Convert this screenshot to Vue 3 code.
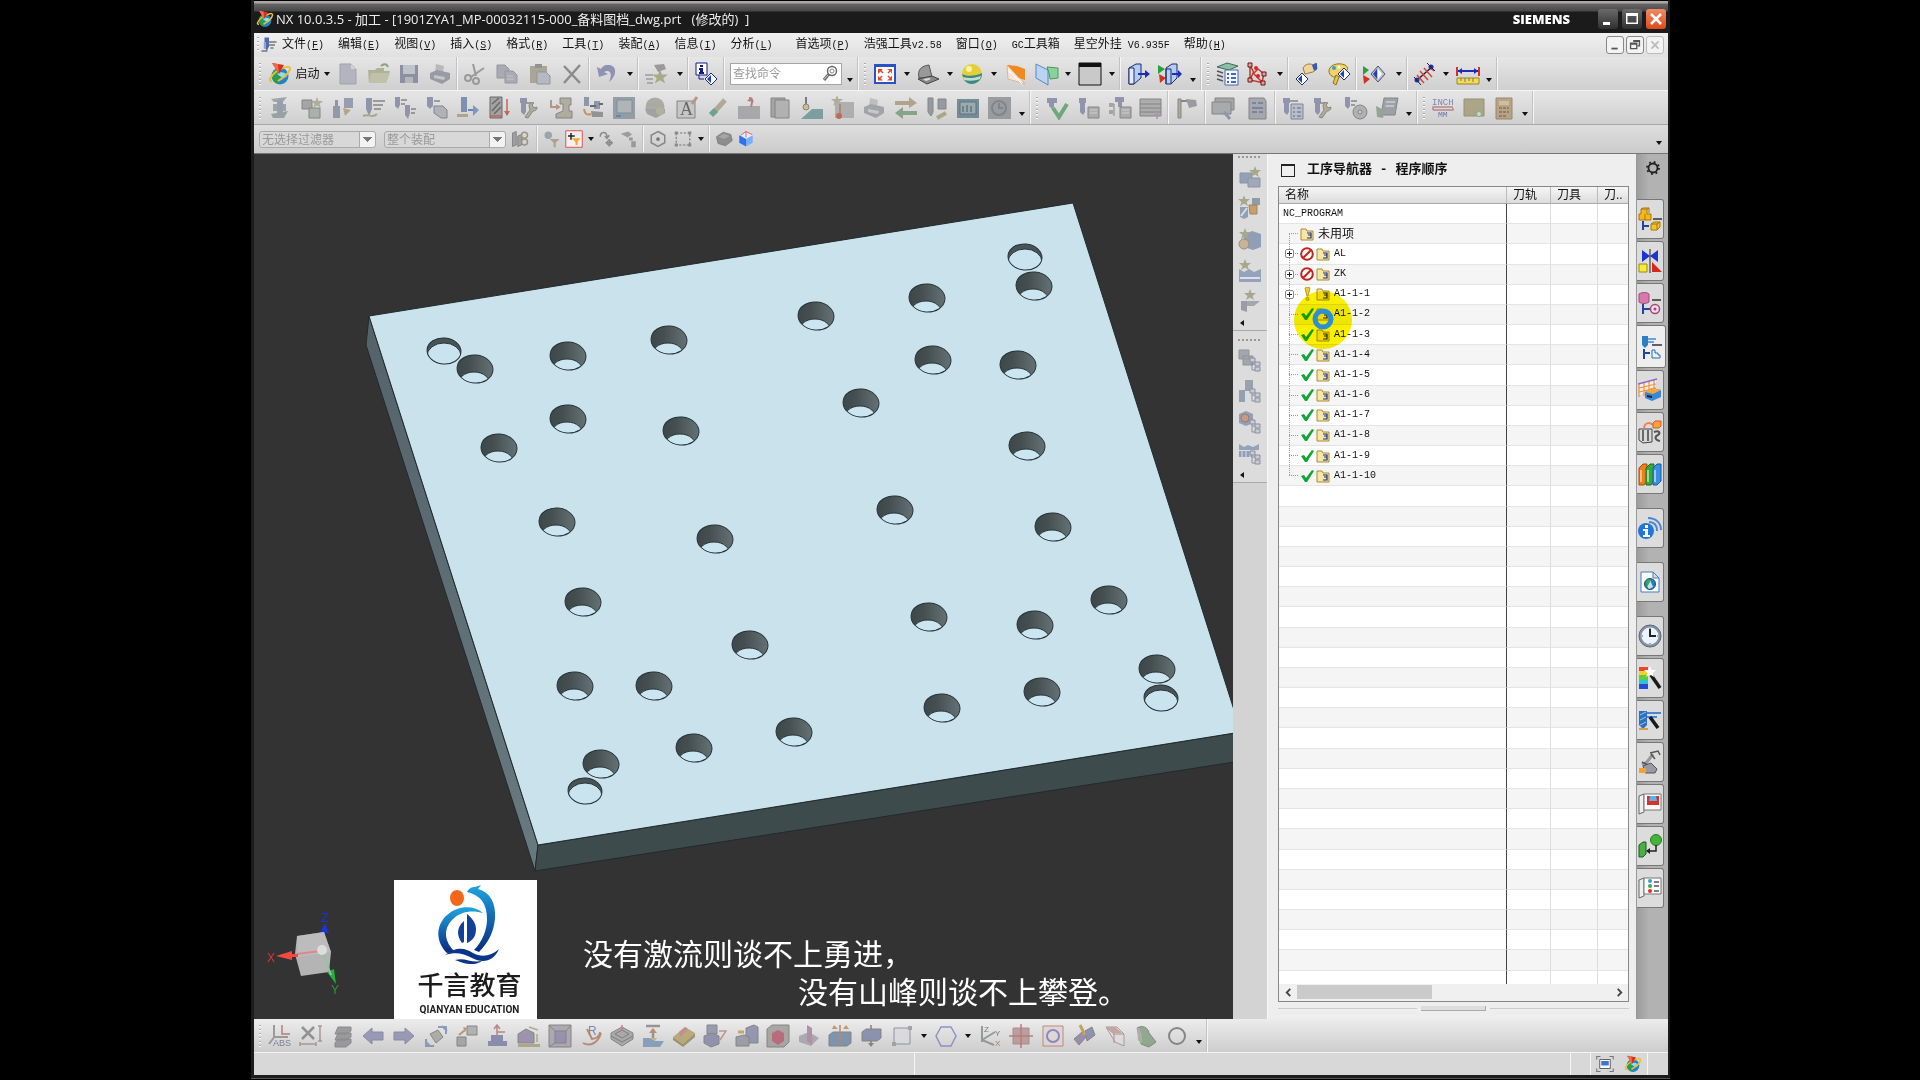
<template>
  <div class="desktop">
    <div class="window">
      <header class="titlebar">
        <svg class="ico18" viewBox="0 0 24 24" v-html="icons.nx"></svg>
        <h1>NX 10.0.3.5 - 加工 - [1901ZYA1_MP-00032115-000_备料图档_dwg.prt &nbsp;&nbsp;(修改的)&nbsp; ]</h1>
        <span class="brand">SIEMENS</span>
        <div class="winbtns">
          <button aria-label="最小化"><svg viewBox="0 0 20 20"><path d="M5 13h7v3H5z" fill="#fff" /></svg></button>
          <button aria-label="最大化"><svg viewBox="0 0 20 20"><path d="M4 4h12v11H4z M5.500 7v6.500h9V7z" fill="#fff" fill-rule="evenodd" /></svg></button>
          <button class="close" aria-label="关闭"><svg viewBox="0 0 20 20"><path d="M5 5l10 10M15 5L5 15" stroke="#fff" stroke-width="2.500" /></svg></button>
        </div>
      </header>

      <nav class="menubar">
        <i class="grip"></i>
        <svg class="ico18" viewBox="0 0 24 24" v-html="icons.millMenu"></svg>
        <button v-for="m in menus" :key="m.text" :class="{ spaced: m.spaced }">
          <span v-for="r in runs(m.text)" :key="r" :class="{ latin: isLatin(r) }">{{ r }}</span>
          <span v-if="m.key" class="latin">(<u>{{ m.key }}</u>)</span>
        </button>
        <div class="mdi">
          <button aria-label="最小化窗口"><svg viewBox="0 0 18 18"><path d="M5 12h7v2H5z" fill="#555" /></svg></button>
          <button aria-label="还原窗口"><svg viewBox="0 0 18 18"><path d="M7 4h7v6h-2M4 7h7v6H4zM4 8h7M7 5h7" fill="none" stroke="#555" stroke-width="1.500" /></svg></button>
          <button class="off" aria-label="关闭窗口" disabled><svg viewBox="0 0 18 18"><path d="M5 5l8 8M13 5l-8 8" stroke="#bbb" stroke-width="2" /></svg></button>
        </div>
      </nav>

      <div class="toolrow">
        <div v-for="(g, gi) in row1" :key="gi" class="group" :style="{ width: g.w + 'px' }">
          <i v-if="g.grip" class="grip"></i>
          <template v-for="(t, ti) in g.items" :key="ti">
            <i v-if="t === 'v'" class="caret"></i>
            <i v-else-if="t === 'o'" class="caret low"></i>
            <button v-else-if="t === 'start'" class="start">
              <svg class="ico24" viewBox="0 0 24 24" v-html="icons.nx"></svg>启动<i class="caret"></i>
            </button>
            <label v-else-if="t === 'search'" class="search">
              <input type="text" placeholder="查找命令" aria-label="查找命令" />
              <svg viewBox="0 0 18 18"><circle cx="11" cy="6" r="4.500" fill="#fff" stroke="#666" stroke-width="1.500" /><circle cx="11" cy="6" r="2" fill="none" stroke="#888" /><path d="M7.500 9.500L3 15" stroke="#666" stroke-width="3" /><path d="M7 10l-4 4.500" stroke="#ddd" /></svg>
            </label>
            <button v-else class="tool" :aria-label="t"><svg class="ico24" viewBox="0 0 24 24" v-html="icons[t]"></svg></button>
          </template>
        </div>
      </div>

      <div class="toolrow">
        <div v-for="(g, gi) in row2" :key="gi" class="group" :style="{ width: g.w + 'px' }">
          <i v-if="g.grip" class="grip"></i>
          <template v-for="(t, ti) in g.items" :key="ti">
            <i v-if="t === 'o'" class="caret low"></i>
            <button v-else class="tool dim" :aria-label="t"><svg class="ico24" viewBox="0 0 24 24" v-html="icons[t]"></svg></button>
          </template>
        </div>
      </div>

      <div class="filterrow">
        <select aria-label="选择过滤器" disabled><option>无选择过滤器</option></select>
        <select aria-label="选择范围" disabled><option>整个装配</option></select>
        <div v-for="(g, gi) in row3" :key="gi" class="group small" :style="{ width: g.w + 'px' }">
          <template v-for="(t, ti) in g.items" :key="ti">
            <i v-if="t === 'v'" class="caret"></i>
            <button v-else class="tool" :aria-label="t"><svg class="ico18" viewBox="0 0 24 24" v-html="icons[t]"></svg></button>
          </template>
        </div>
        <i class="caret last"></i>
      </div>

      <main class="work">
        <section class="viewport">
          <svg class="scene" viewBox="254 154 979 865" preserveAspectRatio="xMinYMin slice">
            <defs>
              <linearGradient id="bore" x1="0" x2="1"><stop offset="0" stop-color="#3d4749" /><stop offset=".35" stop-color="#454f50" /><stop offset="1" stop-color="#667376" /></linearGradient>
              <linearGradient id="left" x1="0" y1="0" x2="0" y2="1"><stop offset="0" stop-color="#54626a" /><stop offset="1" stop-color="#687a80" /></linearGradient>
              <clipPath id="rim"><ellipse rx="18" ry="14" transform="rotate(5)" /></clipPath>
              <clipPath id="rim2"><ellipse rx="17" ry="13" transform="rotate(5)" /></clipPath>
            </defs>
            <path d="M369 316L366 345 535 871 538 845z" fill="url(#left)" stroke="#222a2c" />
            <path d="M538 845L535 871 1241 761 1241 732z" fill="#3e4b4d" stroke="#222a2c" />
            <path d="M369 316L1073 203 1241 732 538 845z" fill="#c9e2eb" stroke="#1f2a2e" />
            <g v-for="h in holes" :key="h.join()" :transform="`translate(${h[0]} ${h[1]})`">
              <g clip-path="url(#rim)">
                <ellipse rx="19" ry="15" fill="url(#bore)" />
                <ellipse cx="-1" cy="17" rx="17" ry="14" fill="#cbe6f0" stroke="#2b3538" />
              </g>
              <ellipse rx="18" ry="14" fill="none" stroke="#27343a" transform="rotate(5)" />
            </g>
            <g v-for="h in shallow" :key="h.join()" :transform="`translate(${h[0]} ${h[1]})`">
              <g clip-path="url(#rim2)">
                <ellipse rx="18" ry="14" fill="#485357" />
                <ellipse cy="5" rx="17" ry="13" fill="#c9e4ee" stroke="#2b3538" />
              </g>
              <ellipse rx="17" ry="13" fill="none" stroke="#27343a" transform="rotate(5)" />
            </g>
            <!-- view triad -->
            <g class="triad">
              <path d="M320 933l5-10 4 10z" fill="#1b34d6" />
              <path d="M297 936l27-4 7 20-2 20-28 4-6-22z" fill="#b4b4b4" />
              <path d="M297 936l27-4 7 20-33 5z" fill="#c2c2c2" opacity=".6" />
              <path d="M297 954l24-3" stroke="#d88" stroke-width="2" />
              <path d="M276 956l16-5v3h6v3h-6v3z" fill="#f04a42" />
              <path d="M327 972l7-3 2 15z" fill="#25b03c" />
              <path d="M323 953l8 22" stroke="#8fc79a" stroke-width="2" />
              <circle cx="322" cy="950" r="5" fill="#ddd" />
              <text x="267" y="962" fill="#d8382f">X</text>
              <text x="321" y="922" fill="#1b34d6">Z</text>
              <text x="331" y="994" fill="#259a35">Y</text>
            </g>
          </svg>
          <figure class="logo">
            <svg viewBox="0 0 143 84">
              <defs>
                <linearGradient id="q" x1="0" y1="0" x2="0" y2="1"><stop offset="0" stop-color="#1fa5e0" /><stop offset="1" stop-color="#0a2a80" /></linearGradient>
              </defs>
              <ellipse cx="63" cy="18" rx="7" ry="8" fill="#f4661c" />
              <path d="M73 12c2-4 5-5 8-5l6-2-3 4c12 3 18 14 17 29-1 14-7 25-16 34l-5-2c9-9 13-21 13-31 0-15-6-24-20-27z" fill="url(#q)" />
              <path d="M89 33C80 25 64 25 53 35c-12 11-11 27 0 38l8-1c-11-10-12-23-3-32 8-9 21-10 31-7z" fill="url(#q)" />
              <path d="M73 34c5 4 9 9 9 15 0 8-4 12-9 14z M70 41c-7 6-8 14-2 22l2-1z" fill="#123f9a" />
              <path d="M51 75c12-9 20-7 28-2 9 5 18 3 26-4-5 12-16 15-27 9-9-5-17-6-27-3z M61 80c10-3 15 3 27 1-9 6-19 2-27-1z" fill="#0c3488" />
            </svg>
            <figcaption>千言教育<small>QIANYAN EDUCATION</small></figcaption>
          </figure>
          <p class="caption first">没有激流则谈不上勇进，</p>
          <p class="caption second">没有山峰则谈不上攀登。</p>
        </section>

        <aside class="sidebar">
          <div v-for="(s, si) in side" :key="si" class="sideband">
            <i class="grip flat"></i>
            <button v-for="t in s" :key="t" class="tool" :aria-label="t"><svg class="ico24" viewBox="0 0 24 24" v-html="icons[t]"></svg></button>
            <i class="caret left"></i>
          </div>
        </aside>

        <section class="navigator">
          <h2><i class="pin"></i>工序导航器 - 程序顺序</h2>
          <div class="grid">
            <div class="tablewrap">
              <table>
                <colgroup><col class="c1" /><col class="c2" /><col class="c3" /><col class="c4" /></colgroup>
                <thead>
                  <tr><th>名称</th><th>刀轨</th><th>刀具</th><th>刀..</th></tr>
                </thead>
                <tbody>
                  <tr v-for="(n, i) in nodes" :key="n.name">
                    <td>
                      <div class="node">
                        <span v-if="i > 0" class="guide" :class="{ begin: i === 1, end: i === nodes.length - 1 }">
                          <button v-if="n.open" aria-label="展开"></button>
                        </span>
                        <svg v-if="n.state" class="state" viewBox="0 0 14 14" v-html="icons[n.state]"></svg>
                        <svg v-if="i > 0" class="state" viewBox="0 0 14 14" v-html="icons.folder"></svg>
                        <span class="name" :class="{ latin: isLatin(n.name) }">{{ n.name }}</span>
                      </div>
                    </td>
                    <td></td><td></td><td></td>
                  </tr>
                  <tr v-for="k in 24" :key="k"><td></td><td></td><td></td><td></td></tr>
                  <tr class="cut"><td></td><td></td><td></td><td></td></tr>
                </tbody>
              </table>
            </div>
            <div class="hscroll">
              <button aria-label="向左"><svg viewBox="0 0 10 10"><path d="M7 1L3 5l4 4" fill="none" stroke="#444" stroke-width="2" /></svg></button>
              <div class="track"><i></i></div>
              <button aria-label="向右"><svg viewBox="0 0 10 10"><path d="M3 1l4 4-4 4" fill="none" stroke="#444" stroke-width="2" /></svg></button>
            </div>
            <!-- click highlight with the busy ring -->
            <svg class="busy" viewBox="0 0 60 60">
              <circle cx="30" cy="30" r="29" fill="#f9f000" />
            </svg>
            <svg class="ring" viewBox="0 0 22 22">
              <circle cx="11" cy="11" r="8" fill="none" stroke="#2b8fd6" stroke-width="5" />
            </svg>
          </div>
          <div class="splitter"><i></i></div>
        </section>

        <nav class="tabs">
          <button class="gear" aria-label="设置"><svg class="ico18" viewBox="0 0 24 24" v-html="icons.gear"></svg></button>
          <div v-for="(g, gi) in tabs" :key="gi" class="tabgroup">
            <button v-for="t in g" :key="t" :class="{ active: t === 'opNav' }" :aria-label="t">
              <svg class="ico24" viewBox="0 0 24 24" v-html="icons[t]"></svg>
            </button>
          </div>
        </nav>
      </main>

      <div class="bottomrow">
        <div class="group" :style="{ width: '954px' }">
          <i class="grip"></i>
          <template v-for="(t, ti) in bottom" :key="ti">
            <i v-if="t === 'v'" class="caret"></i>
            <i v-else-if="t === 'o'" class="caret low"></i>
            <button v-else class="tool dim" :aria-label="t"><svg class="ico24" viewBox="0 0 24 24" v-html="icons[t]"></svg></button>
          </template>
        </div>
      </div>
      <footer class="status">
        <span class="cue"></span>
        <span class="msg"></span>
        <span class="slot"></span>
        <span class="tray">
          <svg class="ico18" viewBox="0 0 24 24" v-html="icons.fullscreen"></svg>
          <svg class="ico18" viewBox="0 0 24 24" v-html="icons.nx"></svg>
        </span>
        <span class="slot"></span>
      </footer>
    </div>
  </div>
</template>

<script setup>
const isLatin = (t) => /^[\x20-\x7e]+$/.test(t)
const runs = (t) => t.match(/[\x20-\x7e]+|[^\x20-\x7e]+/g)

const menus = [
  { text: '文件', key: 'F' },
  { text: '编辑', key: 'E' },
  { text: '视图', key: 'V' },
  { text: '插入', key: 'S' },
  { text: '格式', key: 'R' },
  { text: '工具', key: 'T' },
  { text: '装配', key: 'A' },
  { text: '信息', key: 'I' },
  { text: '分析', key: 'L' },
  { text: '首选项', key: 'P', spaced: true },
  { text: '浩强工具v2.58' },
  { text: '窗口', key: 'O' },
  { text: 'GC工具箱' },
  { text: '星空外挂 V6.935F' },
  { text: '帮助', key: 'H' }
]

// 'v' is a drop-down arrow, 'o' the overflow arrow at the end of a band
const row1 = [
  { w: 204, grip: true, items: ['start', 'newFile', 'open', 'save', 'print'] },
  { w: 132, items: ['cut', 'copy', 'paste', 'del'] },
  { w: 49, items: ['undo', 'v'] },
  { w: 50, items: ['star', 'v'] },
  { w: 36, items: ['cmdInfo'] },
  { w: 134, items: ['search', 'o'] },
  { w: 262, grip: true, items: ['fit', 'v', 'shade', 'v', 'ball', 'v', 'clipPlane', 'section', 'v', 'bgRect', 'v'] },
  { w: 81, items: ['door', 'door2', 'o'] },
  { w: 87, grip: true, items: ['layers', 'redNodes', 'v'] },
  { w: 68, items: ['handShow', 'palette'] },
  { w: 51, items: ['playShow', 'v'] },
  { w: 90, items: ['measure', 'v', 'ruler', 'o'] }
]

const row2 = [
  {
    w: 777, grip: true,
    items: ['insertMill', 'copyStar', 'tool', 'op', 'opTree', 'opCopy', 'mill2', 'hatch', 'millKey', 'flow', 'millFlow', 'frame', 'dome', 'letterA', 'pen',
      'boxUp', 'pages', 'slope', 'rectStar', 'print', 'swap', 'drills', 'panel', 'clock2', 'o']
  },
  { w: 138, grip: true, items: ['check', 'opSheet', 'opTreeSheet', 'sheet'] },
  { w: 37, items: ['arm'] },
  { w: 70, items: ['screens', 'doc'] },
  { w: 142, items: ['millList', 'millKey', 'millDisc', 'listCheck', 'o'] },
  { w: 116, grip: true, items: ['inch', 'board', 'calc', 'o'] }
]

const row3 = [
  { w: 32, items: ['asm'] },
  { w: 106, items: ['funnel', 'funnelRed', 'v', 'snap', 'snap2'] },
  { w: 66, items: ['hexDot', 'marquee', 'v'] },
  { w: 50, items: ['grayCube', 'blueCube'] }
]

const bottom = ['abs', 'dims', 'stack', 'arrowL', 'arrowR', 'rotate', 'moveBox', 'extrude', 'cubeDim', 'cubeBox', 'radius', 'net', 'lift', 'slab',
  'millBlock', 'blocks', 'redCube', 'plane', 'splitBox', 'boxDown', 'square', 'v', 'hexagon', 'v', 'axes', 'crossRect', 'circRect', 'tubes', 'chamfer', 'bell', 'circle', 'o']

const side = [
  ['sCopy', 'sTool', 'sBlock', 'sCastle', 'sOp'],
  ['tList', 'tTool', 'tBlock', 'tCastle']
]

const tabs = [
  ['asmNav', 'constraint', 'partNav', 'opNav', 'featNav', 'machine', 'books'],
  ['infoWave'],
  ['web'],
  ['clock', 'rainbow', 'wizard', 'robot', 'roleA', 'link', 'roleB']
]

const nodes = [
  { name: 'NC_PROGRAM' },
  { name: '未用项' },
  { name: 'AL', state: 'ban', open: true },
  { name: 'ZK', state: 'ban', open: true },
  { name: 'A1-1-1', state: 'warn', open: true },
  ...Array.from({ length: 9 }, (_, i) => ({ name: `A1-1-${i + 2}`, state: 'ok' }))
]

const holes = [
  [475, 369], [568, 356], [669, 340], [816, 316], [927, 298], [1034, 286], [933, 360], [1018, 365], [861, 403], [568, 419],
  [499, 448], [681, 431], [1027, 446], [557, 522], [715, 539], [895, 510], [1053, 527], [583, 602], [750, 645], [929, 617],
  [1035, 625], [1109, 600], [575, 686], [654, 686], [601, 764], [694, 748], [794, 732], [942, 708], [1042, 692], [1157, 669]
]
const shallow = [[444, 351], [1025, 257], [1161, 698], [585, 791]]

// shape helpers: filled path, stroked path
const f = (d, fill = '#999', stroke = 'none') => `<path d="${d}" fill="${fill}" stroke="${stroke}"/>`
const s = (d, stroke = '#888', w = 1.5) => `<path d="${d}" fill="none" stroke="${stroke}" stroke-width="${w}"/>`
const c = (x, y, r, fill = 'none', stroke = 'none', w = 1) => `<circle cx="${x}" cy="${y}" r="${r}" fill="${fill}" stroke="${stroke}" stroke-width="${w}"/>`
const t = (x, y, size, fill, str, family = 'Liberation Sans') => `<text x="${x}" y="${y}" font-family="${family}" font-size="${size}" fill="${fill}">${str}</text>`

const G = '#9c9c9c'
const B = '#8389a3'
const D = '#777'
const star = 'M0 -6L1.500 -2 6 -2 2.500 1 4 5 0 2.500 -4 5 -2.500 1 -6 -2 -1.500 -2z'
const starAt = (x, y, col = '#a8a68c') => `<path transform="translate(${x} ${y})" d="${star}" fill="${col}"/>`
const drill = f('M2 2h7v5H8v9l-2 3-3-3V7H2z', B)
const sheetIco = (x, y) => f(`M${x} ${y}h11v11h-11z`, '#a6a6a6', D) + s(`M${x + 2} ${y + 3}h7M${x + 2} ${y + 6}h7`, '#ccc', 1)
const wrench = f('M11 10c0-3 3-4 5-3l-2 2 2 3 3-1c0 3-2 4-4 4l-5 7-3-1 5-7z', '#aba68a', D)
const cube = (a, b, d) => f('M3 7l9-4 9 4-9 5z', a) + f('M3 7l9 5v10l-9-5z', b) + f('M21 7l-9 5v10l9-5z', d)
const diamond = (x, y) => f(`M${x} ${y - 6}l6 6-6 6-6-6z`, '#fff', '#1b2f8f') + f(`M${x} ${y - 4}v8l-4-4z`, '#2442b8')
const tree = s('M14 12v10h3M14 16h3', '#8a8fa0', 1) + f('M12 10h5v4h-5zM17 14h5v4h-5zM17 19h5v4h-5z', '#c9cbd2', '#8a8fa0')

const icons = {
  nx: c(12, 14, 8.5, '#1c86c8') + f('M6 8c5 2 6 6 4 14-5-2-8-7-4-14z', '#2f9c46') + f('M9 12c3-3 8-2 10 1 0 3-4 3-6 2z', '#8fdcf5')
    + s('M4 19C0 20 2 14 9 9c7-4 14-6 13-2-1 5-7 9-12 12', '#e8bf35', 2) + f('M4 1l12 2-5 9z', '#d6301f') + f('M4 1l6 1 1 10z', '#f26a4c'),
  millMenu: f('M6 2h6v12l-3 6-3-6z', '#5569a8') + s('M2 20h8M12 8h10M12 12h8M14 16h4', D, 2) + f('M5 8h3v9H5z', '#8fa2d8'),
  newFile: f('M4 2h11l5 5v15H4z', '#b3b4bd', '#a2a3ab') + f('M15 2v5h5z', '#d3d4da'),
  open: f('M1 8h7l2-2h7v3h6l-4 12H2z', '#b0b298') + f('M4 11h19l-4 10H2z', '#bfc2a8') + s('M14 4c3-3 6-2 7 1', '#8fa083', 2),
  save: f('M3 3h18v18H3z', '#8d90a2') + f('M6 3h12v9H6z', '#c1c2cb') + f('M8 15h8v6H8z', '#b5b6be'),
  print: f('M8 2l8 2-1 7H7z', '#b9b9bc') + f('M2 11l7-3 13 3v6l-8 5-12-5z', '#9a9ba2') + f('M6 13l11 2-1 3-10-2z', '#c6c6c8'),
  cut: s('M10 2l3 12M21 6L8 15', '#9a9a9c', 2) + c(5, 16, 3, 'none', '#9a9a9c', 2) + c(13, 19, 3, 'none', '#9a9a9c', 2),
  copy: f('M2 3h8l4 4v9H2z', '#a9aab4', '#96979f') + f('M10 9h8l4 4v8H10z', '#a9aab4', '#96979f') + s('M12 14h6M12 17h7', '#c5c5cc', 1),
  paste: f('M2 4h17v17H2z', '#aaa59a') + f('M7 2h7v4H7z', '#929292') + f('M9 10h9l4 4v8H9z', '#b6b8c2', '#94959d'),
  del: s('M4 4l16 17M20 3L4 21', '#8b8b8b', 2.5),
  undo: f('M2 5l2 10 9-3-4-2c6-3 9 2 5 10 9-7 8-18-2-17-3 0-5 2-6 4z', '#8f93b3'),
  star: s('M1 13h8M2 17h7M3 21h6', G, 1.5) + `<g transform="translate(16 15) scale(1.300)">${f(star, '#a9aa85')}</g>` + f('M10 3l10-1 2 5-8 3z', '#9a9a9a'),
  cmdInfo: f('M2 1h11v12H2z', '#fff', '#111a88') + f('M6 3h3v2H6zM5 6h4v4h1v2H5v-2h1V8H5z', '#111a88') + s('M5 13v4h5', '#111a88', 1) + diamond(17, 17),
  fit: f('M1 2h22v20H1z', '#2a52c4') + f('M3 5h18v15H3z', '#fff') + f('M5 7h5L8.500 8.500l2 2-1 1-2-2L5 12zM19 7v5l-1.500-2.500-2 2-1-1 2-2L14 7zM5 18.500v-5l1.500 2 2-2 1 1-2 2 2.500 2zM19 18.500h-5l2.500-2-2-2 1-1 2 2 1.500-2z', '#e0492d'),
  shade: f('M3 16c-2-9 3-12 10-13l3 12z', '#999', '#555') + f('M2 17l14-3 7 3-12 5z', '#888', '#444') + f('M7 17l6-1 2 1-5 2z', '#ddd'),
  ball: c(12, 12, 10, '#e2cf3a') + f('M2 12c5 3 14 2 20-1 0 4-1 6-3 8-5 4-11 4-15-1z', '#3b8a8a') + f('M3 15c6 2 12 1 18-1l-1 3c-5 2-11 2-16 1z', '#c9dccb') + c(9, 7, 3, '#fbf3a0'),
  clipPlane: f('M3 4l3-1 15 19-17-5z', '#f4e6da', '#ddb594') + f('M3 3l10 1 8 3v11l-6-2z', '#ef8a22') + s('M4 8l14 14', '#fff', 1),
  section: f('M1 2l12 6v15L1 16z', '#b9d4f2', '#5a88c0') + f('M12 5l11 1v10l-8 1-1-6z', '#8ad29b', '#489a62'),
  bgRect: f('M1 1h22v22H1z', '#c9c9c9', '#111') + f('M1 1h22v4H1z', '#111'),
  door: f('M3 6l7-4h5v14l-7 6H3z', '#b5ccf3', '#1d2a6c') + f('M3 6h5v16H3z', '#e3ecfb', '#1d2a6c') + s('M12 12h8', '#1a2cb8', 2) + f('M19 8l5 4-5 4z', '#1a2cb8'),
  door2: f('M0 3l7 4-7 5z', '#27a13b') + f('M1 12l7 4-6 5z', '#cf3322') + f('M8 6l6-4h5v14l-6 6H8z', '#b5ccf3', '#1d2a6c') + s('M8 22V7h5v15', '#1d2a6c', 1) + s('M14 12h7', '#1a2cb8', 2) + f('M20 8l4 4-4 4z', '#1a2cb8'),
  layers: f('M1 5l10-4 11 3-9 4z', '#8bbfa6', '#3f6a55') + s('M1 9l6 2M1 13l6 2M1 17l6 2', '#555', 1.5) + f('M9 8h13v15H9z', '#f2f6ff', '#4766b8') + s('M11 12h2M15 12h5M11 16h2M15 16h5M11 20h2M15 20h5', '#4766b8', 2),
  redNodes: s('M4 3v15l14 3M4 3l4 8 4-4 6 5-2 8-9-9-3 7', '#c23a32', 1.5) + f('M2 1h4v4H2zM2 16h4v4H2zM16 10h4v4h-4zM15 19h4v4h-4z', '#caa', '#711') + c(10, 6, 2, '#d22') + c(12, 14, 2, '#d22'),
  handShow: f('M9 6c2-4 7-5 10-3l3-2 1 6-4 3-8 2z', '#f0d59a', '#9a7d3a') + f('M18 3l5-2v6l-3 2z', '#3358c0') + diamond(8, 17),
  palette: f('M2 9c0-6 9-9 16-6 5 3 2 6-1 7-4 1-2 4-5 5-5 1-10-1-10-6z', '#f0d46a', '#8c7420') + c(7, 6, 2, '#3aa0c8') + c(12, 5, 1.5, '#fff') + diamond(17, 12) + f('M9 13l3 2-3 8-3-2z', '#e6c643', '#8c7420'),
  playShow: f('M1 4l6 4-6 5z', '#27a13b') + f('M1 13l7 4-6 5z', '#cf3322') + f('M16 4l7 8-7 8-7-8z', '#b8c4d8', '#556') + f('M15 7v10l-4-5z', '#2442b8') + f('M16 7l4 5-4 5z', '#fff'),
  measure: s('M3 19L20 4', '#223', 1.5) + s('M7 9l8 9M11 6l8 9M4 13l7 8M16 4l5 5', '#d0463c', 1.5) + c(4, 18, 2.5, '#2233a8') + c(18, 5, 2.5, '#2233a8') + s('M1 15l7 8M14 1l8 8', '#223', 1),
  ruler: s('M1 5v9M23 5v9', '#cf3322', 2) + s('M2 9h20', '#1a2cb8', 2) + f('M2 9l4-3v6zM22 9l-4-3v6z', '#1a2cb8') + f('M1 16h22v6H1z', '#f2dc5a', '#9a8420') + s('M5 16v3M9 16v4M13 16v3M17 16v4', '#776', 1),

  insertMill: f('M3 3l16-2-4 5H6zM5 8h13v7H5z', '#8fa09a') + f('M3 18l17-3-4 7H5z', '#8a9c94') + f('M9 4h6v14H9z', '#8f93a8'),
  copyStar: f('M2 4h10v9H2z', G, D) + f('M9 12h11v10H9z', '#a5a9a5', D) + starAt(17, 7),
  tool: f('M2 10h7v12H2z', '#85919f') + f('M4 4h3v6H4z', B) + f('M13 2h9v10h-9z', '#8a93a8') + f('M12 12l8 2-6 6z', '#b39a78'),
  op: f('M4 2h6v11l-3 7-3-7z', B) + s('M11 5h12M11 9h10M12 13h7', D, 1.5) + s('M1 20c6-3 9 3 14-2', '#a59e78', 2),
  opTree: f('M2 1h5v8l-2 4-3-3z', B) + s('M8 4h6M8 8h4', D) + f('M12 9h5v8l-2 6-3-4z', B) + s('M18 13h5M18 17h4', D),
  opCopy: f('M2 1h6v9l-3 3-3-3z', B) + s('M9 5h6', D) + f('M9 10h9l4 4v8h-6l-7-5z', '#a9acb4', D),
  mill2: f('M5 1h6v15H5z', '#6f84a8') + f('M1 18h11v3H1z', '#a59e78') + s('M12 14h6', '#5a76b0', 2) + f('M17 9l6 5-6 6z', '#6f8cbb'),
  hatch: f('M3 1h12v21H3z', '#9a9a9a', '#555') + s('M5 8l7-6M5 15l8-9M7 18l7-7', '#555', 1.5) + s('M3 20h12M20 3v16', '#c0504a', 1.5) + f('M17 15h6l-3 5z', '#c0504a'),
  millKey: drill + s('M8 7h7', D) + wrench,
  flow: s('M1 4v7h7', '#b08a74', 2) + f('M6 8l5 3-5 3z', '#b08a74') + f('M10 2h11v7h-2v6h3v7H6v-4l7-3V8h-3z', '#a7a795', D),
  millFlow: f('M3 1h5v9H3zM13 5h6v8h-6z', B) + s('M3 13c1 6 4 6 7 5', '#c08850', 2) + s('M9 10h6M18 8h4', '#555', 2) + f('M10 15l12 1v5H11z', '#888'),
  frame: f('M1 1h22v22H1z', '#8b939b') + f('M5 4h15v13H5z', '#a9aeb0', '#68859a') + f('M4 19h5v2H4z', '#4d7a9a'),
  dome: c(12, 11, 9.5, '#a3a19a') + f('M2 13h20v4l-9 5-9-4z', '#999') + c(17, 15, 4, '#adab92'),
  letterA: f('M2 5h18v17H2z', '#c4c4c4', D) + t(5, 19, 18, '#555', 'A', 'Liberation Serif') + s('M22 1l-5 7', '#b08a80', 3),
  pen: s('M19 4L9 15', '#aba086', 5) + s('M10 14l-5 5', '#5c9a87', 6),
  boxUp: f('M1 10h22v13H1z', '#a0a0a4') + s('M12 2c5 0 3 4 2 9', '#b07070', 2) + f('M10 5l4-4 3 5z', '#b07070'),
  pages: f('M2 2h14v19H2z', G, D) + f('M6 4h14v18H6z', '#ababab', D),
  slope: f('M1 23l11-10h11v10z', '#6d9599') + s('M6 1v10', '#668', 2) + c(6, 11, 3, '#c3bd7a', D),
  rectStar: f('M4 6h19v16H4z', '#a8a8a8') + starAt(6, 5) + s('M9 8v10', '#b06a5a', 1.5) + c(8, 20, 3, '#b85a48'),
  swap: f('M1 5h14V1l8 6-8 5V9H1z', '#aa9a7c') + f('M23 15H9v-4l-8 6 8 6v-4h14z', '#7b9b78'),
  drills: f('M3 2h5v14l-2 4-3-4z', '#8a8f98', '#777') + f('M13 3h8v10h-8z', '#8a8f98', '#777') + s('M12 22l9-5', '#a79e78', 4),
  panel: f('M1 3h22v19H1z', '#62808c') + f('M4 6h16v12H4z', '#8fa2a6', '#4b6470') + s('M7 10v6M11 9v7M15 10v6', '#4b6470'),
  clock2: f('M1 1h23v22H1z', '#8f9296') + c(12, 12, 7, 'none', '#73767d', 2) + s('M12 7v5h4', '#73767d', 2),
  check: f('M2 2h10v5H9v4L7 13 4 10V7H2z', B) + s('M8 12l6 9 8-13', '#5f9e6c', 4),
  opSheet: drill + sheetIco(11, 11),
  opTreeSheet: f('M7 1h9v5h-2v5h-4V6H7z', B) + s('M2 8h4v12', D, 1) + f('M1 7h4v4H1zM1 14h4v4H1z', G) + sheetIco(12, 11),
  sheet: f('M1 3h21v17H1z', '#a5a5a5', D) + s('M1 8h21M1 12h21M1 16h21', '#777', 1) + s('M18 14v9M15 19h7', '#a586aa', 1.5),
  arm: f('M4 3h3v19H4z', '#aaa58c', D) + s('M7 5h6', D, 2) + f('M12 3l10 1 1 6-8 2z', '#8e9095'),
  screens: f('M4 2h19v12H4z', G, D) + f('M1 6h19v12H1z', '#a0a2a6', D) + s('M13 16l6 7', '#88a', 3),
  doc: f('M3 2h15l2 3v18H3z', '#9ba0aa', D) + s('M6 7h4M12 7h5M6 12h11M6 16h5M13 16h4', '#5f6880', 1.5),
  millList: drill + s('M9 5h8', D) + f('M10 8h12v15H10z', '#b5bac6', '#6c7694') + s('M12 12h2M16 12h4M12 16h2M16 16h4M12 20h2M16 20h4', '#6c7694', 1.5),
  millDisc: f('M1 1h5v9l-2 3-3-3z', B) + s('M7 5h6M7 9h4', D) + c(16, 16, 7, '#a9aaae', D) + c(16, 16, 2, '#ccc', D),
  listCheck: f('M9 2h14l-3 17H6z', '#9298a0', D) + s('M11 6h9M10 10h9', '#ccc', 1.5) + f('M1 10l6 3 4-4-3 13-6-1z', '#8c9a8c'),
  inch: t(1, 9, 9, '#6f78a0', 'INCH', 'Liberation Mono') + s('M2 14v-3h20M22 12v2H2', '#b07a80', 1.5) + t(7, 21, 8, '#5f6898', 'MM', 'Liberation Mono'),
  board: f('M2 3h20v17H2z', '#a39d78', '#8a8566') + c(17, 18, 2.5, '#cfd8cc', '#7aa088'),
  calc: f('M4 2h16v21H4z', '#b29a78', '#8f7a60') + f('M7 5h10v4H7z', '#cdb99a') + s('M7 12h3M11 12h3M15 12h2M7 16h3M11 16h3M15 16h2M7 20h3M11 20h3', '#8a6f52', 2),

  asm: f('M2 4l5-2v18l-5 2zM9 8l5-2v14l-5 2z', '#a0a0a0', D) + c(18, 7, 4, 'none', '#9a9684', 2) + c(18, 16, 4, 'none', '#9a9684', 2),
  funnel: c(7, 7, 5, '#9aa6ac') + f('M9 12h13l-5 5v6h-3v-6z', '#aaa58a'),
  funnelRed: f('M1 1h22v22H1z', '#f7eeee', '#d22c2c') + s('M8 4v9M4 8h9', '#222', 2) + f('M9 11h12l-4 4v5h-3v-4z', '#f2a93a'),
  snap: s('M3 9c0-7 9-8 9 0M9 8l3 3 3-4M15 12v10M10 17h10', '#8a8a8a', 2) + c(15, 17, 3, 'none', '#8a8a8a', 1.5),
  snap2: f('M1 5l10-3 5 4-6 4z', G) + f('M12 10h5v4h-5zM15 15h6v8h-6z', '#999'),
  hexDot: s('M12 2l9 5v10l-9 5-9-5V7z', '#888', 2) + c(12, 12, 2.5, '#777'),
  marquee: `<path d="M3 4h18v16H3z" fill="none" stroke="#777" stroke-width="1.500" stroke-dasharray="3 2"/>` + f('M1 2h4v4H1zM19 2h4v4h-4zM1 18h4v4H1zM19 18h4v4h-4z', '#888'),
  grayCube: f('M2 9l9-6 10 3 2 8-9 7-10-3z', '#8d8d8d', '#777') + f('M4 9l8-4 8 3-8 4z', '#a6a6a6'),
  blueCube: cube('#dfeeff', '#2f6ff2', '#79b0fb') + s('M5 7l7-5 8 4M12 2v8', '#d44', 1),

  abs: s('M6 1v12l14 0M7 12l-6 8', '#8f8f8f', 2) + s('M14 1v9h8', '#b96a6a', 1.5) + t(5, 22, 9, '#6a6f92', 'ABS'),
  dims: s('M3 3l12 12M15 3L3 15', '#858585', 2.5) + s('M21 2v15M19 2h4M19 17h4M1 20h16M1 18v4M17 18v4', '#a58a8a', 1.5),
  stack: f('M8 3h13v4l-5 3H5zM8 9h13v4l-5 3H5zM8 15h13v4l-5 4H5v-4z', '#8f8f93', '#7d7d80'),
  arrowL: f('M2 12l9-8v4h11v8H11v4z', '#8c8fae', '#7a7d9b'),
  arrowR: f('M22 12l-9-8v4H2v8h11v4z', '#8c8fae', '#7a7d9b'),
  rotate: f('M6 10l8-4 5 7-7 6z', '#a4a4a0', D) + s('M14 3h8v7M18 2l5 5M10 22H2v-7M6 22l-4-4', '#7e90b5', 2),
  moveBox: f('M12 2h10v9H12z', '#aaa', D) + f('M2 13h9v9H2z', '#9aa09a', D) + s('M4 11l6-5', '#b58a60', 2) + f('M8 3l4 1-2 4z', '#b58a60'),
  extrude: f('M5 11h12v6h4v5H2v-5h3z', '#7c80a4') + s('M11 12V2M8 5l3-4 3 4M11 8h8', '#b07878', 1.5),
  cubeDim: f('M1 10l8-5 8 4v10H1z', '#9487a5', D) + s('M12 3l9 3M20 10v8', '#a0a87c', 1.5) + f('M1 20h22v3H1z', '#a89f7c'),
  cubeBox: f('M1 1h22v22H1z', '#a3a0ab', D) + f('M7 7h11v12H7z', '#8f84a6', D) + s('M1 1l6 6M23 1l-5 6M1 23l6-4', D, 1),
  radius: s('M8 5l5 10c5 0 8-4 8-7M4 19c7 4 15 0 18-10', '#b07e66', 2) + t(9, 11, 12, '#6c76a8', 'R'),
  net: f('M1 9l11-6 11 6v6l-11 7-3-2-8-5z', '#a0a0a0', D) + s('M5 10l7-4 7 4-7 4zM1 12l11 6 11-6', '#6f6f6f', 1) + s('M12 1v6', '#c07070'),
  lift: f('M2 14h8l4 3h9l-4 6H2z', '#7b96b8') + s('M5 2h14M12 5v9', '#888', 2.5) + f('M8 9l4-5 4 5z', '#b88060') + f('M8 14h8l-2 3z', '#c4b070'),
  slab: f('M1 13L13 3l10 6-12 11z', '#b3a06a') + f('M1 13l10 7 12-11v4L11 23 1 16z', '#8f8b60') + f('M7 8l6-5 3 2-8 8z', '#c08080'),
  millBlock: f('M4 1h10v9H4z', '#8d90a8', D) + f('M1 12l8-3 7 3v8l-8 3-7-4z', '#8587a6', D) + s('M16 7h7l-6 9', '#b58a80', 1.5),
  blocks: f('M11 4l8-3 4 2v16h-12z', '#868ba8', D) + f('M1 13l8-2 5 2v9H1z', '#93939d', D) + s('M3 8h6', '#c0a050', 3),
  redCube: f('M1 5l5-4h17v17l-5 5H1z', '#9d9d9a', D) + f('M6 9l6-3 6 3v8l-6 4-6-4z', '#b3596b'),
  plane: f('M2 12l10-4 10 6-8 8-12-4z', '#a3a0ab') + f('M10 1l5 3v17l-5-4z', '#a9849a'),
  splitBox: f('M1 11l4-3h18v11l-4 3H1z', '#6f88a5', D) + s('M12 1v20', '#b07a60', 1.5) + f('M6 1l4 4H4zM18 1l3 4h-6z', '#b98c5c'),
  boxDown: f('M3 8l4-3h15v9l-4 3H3z', '#7c86a5', D) + s('M12 1v4M12 17v5', '#866', 1.5) + f('M9 19h6l-3 4z', '#777'),
  square: f('M4 4h16v16H4z', '#dadada', '#8084a0') + f('M2 18h4v4H2zM18 2h4v4h-4z', '#999'),
  hexagon: s('M7 3h10l5 9-5 10H7L2 12z', '#8087bf', 1.5),
  axes: s('M4 2v16M4 16l13-8M4 16l12 5', '#8a8f8a', 2) + t(6, 8, 8, '#666', 'Z') + t(17, 12, 8, '#666', 'Y') + t(17, 22, 8, '#a66', 'X'),
  crossRect: f('M4 4h16v16H4z', '#b49494', '#a08080') + s('M12 0v24M0 12h24', '#b86a6a', 1.5),
  circRect: f('M2 2h20v20H2z', '#dfd6d6', '#bb7a66') + c(12, 12, 6, 'none', '#7f78b5', 2),
  tubes: f('M2 15l8-7 5 4-8 9z', '#9081a5', D) + f('M13 7l7-4 3 8-8 6z', '#8087a8', D) + s('M8 1l5 10', '#b89a50', 3),
  chamfer: f('M3 3h11l7 7v12l-9-4z', '#ddd', '#a08f8f') + s('M3 3l8 7h10M11 10v9', '#b07e7e', 1) + f('M3 3h9l7 6h-9z', '#c09a9a'),
  bell: f('M3 4c5-3 11-1 12 5l7 9-7 5-8-3z', '#84a080', D) + f('M3 4c4 0 5 6 5 16L4 16z', '#a6a6a6'),
  circle: c(12, 12, 8, 'none', '#777', 2),

  sCopy: f('M2 8h12v10H2z', '#93a0b5', '#8a94a5') + f('M10 13h12v9H10z', '#9fa9b8', '#8a94a5') + starAt(17, 7),
  sTool: starAt(6, 5) + f('M2 11h8v10l-4 2-4-2z', '#8fa0b5') + s('M3 20l6-8', '#d8dde4', 2) + f('M14 2h8v7h-8z', '#8f9aab') + f('M11 9h8v9h-7z', '#c79f6e', '#9d8560'),
  sBlock: f('M6 8l8-4 9 3v13l-8 3-9-3z', '#8e9fb7') + c(6, 17, 5, '#c6b39a', '#a08d70') + starAt(7, 7),
  sCastle: f('M1 11l5 3 5-3 5 3 7-3v13H1z', '#93a4ba') + s('M2 20h20', '#dde', 2) + starAt(7, 7),
  sOp: f('M3 12h6v11l-6-2z', '#999da5') + f('M9 12h13l-6 5H9z', '#a3a6aa') + starAt(12, 6),
  tList: f('M1 2h10v9H1zM5 8h10v9H5z', '#a3a7ad', '#8f949b') + tree,
  tTool: f('M7 1h8v11H7z', '#9aa1aa') + f('M1 11h6v12H1z', '#93a0b0') + tree,
  tBlock: f('M1 4l7-3 7 3v9l-7 3-7-3z', '#8fa0ba') + c(7, 8, 4, '#c79a86', '#a07a6a') + tree,
  tCastle: f('M1 3l5 3 4-2 5 2 6-3v6H1z', '#93a4ba') + f('M1 10h13v6H1z', '#8c9fb8') + s('M4 10v6M8 10v6M12 10v6', '#dde', 1) + tree,

  gear: c(12, 12, 6, 'none', '#222', 2.5) + `<circle cx="12" cy="12" r="8" fill="none" stroke="#222" stroke-width="2.500" stroke-dasharray="2.500 3.783"/>`,
  asmNav: f('M3 2h6v5h4v6H1V7h2z', '#f2b81e', '#a87608') + s('M3 2l2-1h6l-2 1M7 7v6M11 1v5', '#a87608', 1) + s('M5 14v9M5 19h6', '#2343a0', 2) + s('M15 12h9', '#333', 1.5) + f('M13 17l3-2h6v5l-3 3h-6z', '#f2c331', '#a87608') + s('M13 17h6v6M19 17l3-2', '#a87608', 1),
  constraint: f('M4 1l8 6-8 6zM20 1v12l-8-6z', '#1a35d0') + s('M12 0v24', '#222', 1) + f('M1 15h8v8H1z', '#f7ea3a', '#a08a10') + f('M14 13l10 10H14z', '#d6281e'),
  partNav: f('M1 3c3-2 8-2 10 0v8c-3 2-7 2-10 0z', '#d878ab', '#a04a7c') + s('M5 13v10M5 18h7', '#2343a0', 2) + s('M14 9h9', '#333', 1.5) + c(17, 18, 4.5, '#f6dbe8', '#a04a7c', 1.5) + c(17, 18, 1.5, '#a04a7c'),
  opNav: f('M3 1h6v9l-3 3-3-3z', '#2d7fc4') + s('M9 4h8M9 7h6', '#6aa4d6', 2) + s('M5 14v10M5 18h6', '#2343a0', 2) + s('M13 10h10', '#333', 1.5) + f('M13 15h3v3h3v2h2v3h-8z', '#e8f2fc', '#2d6ab0'),
  featNav: f('M1 6L18 1v11L1 17z', '#fbeee0') + s('M1 10l17-4M1 14l17-4M1 6v13M6 4v14M11 3v13M16 2v12', '#e8904a', 1.2) + s('M0 6L19 1', '#8a6ac8', 1.5) + f('M7 14l7-4 9 2v7l-9 4-7-3z', '#3c86d6') + f('M7 14l7-4 9 2-8 4z', '#f5a63c') + f('M9 17l5 1v2l-5-1z', '#222'),
  machine: f('M1 9h13v13l-9 1-4-3z', '#d8d8d8', '#444') + s('M5 10v11M10 10v11', '#444') + s('M6 8c1-6 6-6 9-3', '#f0805a', 2) + f('M15 3l2-2h6v5l-2 2h-6z', '#f9a23c', '#d05a20') + s('M16 12c5-2 7 1 4 3-4 2-3 5 2 6', '#555', 2),
  books: f('M1 6l4-4h4v17l-3 4H1z', '#f07c1c', '#a84c08') + s('M3 8v12', '#ffd9a0') + f('M8 6l4-4h4v17l-3 4H8z', '#34a83c', '#1c7022') + s('M10 8v12', '#b8f0b0') + f('M15 6l4-4h4v17l-4 4h-4z', '#3b8fe2', '#1b589c') + s('M17 8v12', '#b8dcff'),
  infoWave: c(8, 15, 8, '#2475d8') + f('M7 9h3v3H7zM5 13h5v6h2v2H5v-2h2v-4H5z', '#fff') + s('M11 6c5 0 8 3 8 9M10 2c8 0 13 5 13 12', '#4c86d0', 2),
  web: f('M3 2h12l6 6v14H3z', '#f7fbff', '#4a7cc0') + f('M15 2v6h6z', '#cfe0f5', '#4a7cc0') + c(12, 14, 5.5, '#2a7dbd', '#1a5a40') + f('M12 10l3 7-4 2-2-3z', '#c5e4f2') + f('M8 11l3-2 1 3-3 5z', '#3fa84c'),
  clock: c(12, 12, 11, '#8793a6', '#5c6675') + c(12, 12, 8.5, '#eaf3ff') + s('M12 5v7h6', '#222', 2) + s('M12 4v1M12 19v1M4 12h1M19 12h1', '#555', 1),
  rainbow: f('M1 1h9v4H1z', '#ee4423') + f('M1 5h9v4H1z', '#f8d21c') + f('M1 9h9v5H1z', '#5cd038') + f('M1 14h9v4H1z', '#28c4d8') + f('M1 18h9v5H1z', '#2648d8') + s('M13 9l9 13', '#1a1a1a', 3.5) + starAt(12, 6, '#fff'),
  wizard: f('M1 3h8v14l-4 4-4-4z', '#2f6fc0') + s('M2 7l6-3M2 12l6-3M2 17l6-3', '#9cc4ee', 1) + s('M9 5h14M9 9h10', '#4c86d0', 2) + s('M12 9l8 11', '#1a1a1a', 3.5) + s('M1 21h9', '#d8a040', 2),
  robot: s('M4 15l5-3 6-8', '#999', 3) + s('M12 3l8-2 2 4M13 4l4 5M4 12l8 4', '#555', 1.5) + f('M5 16l8-3 6 6-2 4H7z', '#9a9aa6', '#555') + f('M1 18h7v5H1z', '#f2a32c'),
  roleA: f('M1 4l5-2v18l-5 2z', '#eee', '#666') + f('M6 2h17v16H6z', '#fafafa', '#777') + f('M9 4h12v9H9z', '#d83224') + f('M12 4h6l1 5h-8z', '#58b2ee'),
  link: c(18, 6, 5.5, '#45b43a', '#2a7d25') + f('M1 11l4-3h3v12l-3 3H1z', '#4cae48', '#1b5f1b') + s('M18 11v6h-8', '#222', 1.5) + f('M8 17l4-3v6z', '#222'),
  roleB: f('M1 4l5-2v18l-5 2z', '#eee', '#666') + f('M6 2h17v16H6z', '#fafafa', '#777') + c(12, 5, 2, '#38a0d0') + c(12, 10, 2, '#3fa84c') + c(12, 15, 2, '#d83224') + s('M16 6h5M16 10h5M16 15h5', '#555', 1.5),
  fullscreen: s('M1 6V2h5M18 2h5v4M23 18v4h-5M6 22H1v-4', '#777', 1.5) + f('M5 6h14v12H5z', '#fff', '#334') + f('M7 8h10v6H7z', '#3e76c8'),

  ban: c(7, 7, 5.8, '#fff', '#c4231c', 2) + s('M3 11l8-8', '#c4231c', 2),
  warn: f('M5 1c2-1 4-1 5 0L8 9H7z', '#f5c933', '#c49a18') + c(7.5, 12, 1.6, '#f5c933', '#c49a18'),
  ok: f('M1 7l3-1 2 3 6-8 2 1-7 11H5z', '#12a534'),
  folder: f('M1 2h5l1 2h6v9H1z', '#f6e7a2', '#a88a3c') + s('M7 6h4v2H8M8 8h3v3H7', '#1e2a8c', 1.2)
}
</script>

<style>
body {
  margin: 0;
  background: #000;
}
</style>

<style scoped>
.desktop {
  display: grid;
  grid-template-columns: 251fr 1419fr 250fr;
  height: 100vh;
  min-height: 700px;
  box-sizing: border-box;
  padding-bottom: 2px;
  background: #000;
  color: #111;
  font: 12px/16px "Liberation Sans", "Noto Sans CJK SC", sans-serif;
}

.window {
  display: flex;
  grid-column: 2;
  flex-direction: column;
  min-width: 0;
  border: solid #1c1c1c;
  border-width: 0 2px 3px 3px;
  box-shadow: 0 1px 0 #555;
  overflow: hidden;
}

button {
  padding: 0;
  border: 0;
  background: none;
  font: inherit;
  color: inherit;
}

svg {
  display: block;
  flex: none;
}

.latin {
  font-family: "Liberation Mono", monospace;
  font-size: 10px;
}

.ico24 {
  width: 24px;
  height: 24px;
}

.ico18 {
  width: 18px;
  height: 18px;
}

/* title */
.titlebar {
  display: flex;
  align-items: center;
  height: 33px;
  flex: none;
  box-sizing: border-box;
  padding: 5px 2px 0;
  background: linear-gradient(#000 0 1px, #aaa5a8 1px 3px, #666 4px, #48484a 11px, #1b1b1b 12px);
  color: #eee;
}

.titlebar h1 {
  flex: 1;
  margin: 0 0 0 2px;
  font: 13px/16px "Open Sans", "Noto Sans CJK SC", sans-serif;
  white-space: nowrap;
}

.brand {
  margin-right: 28px;
  font: 800 13px/16px "Open Sans", "Liberation Sans", sans-serif;
  color: #fff;
}

.winbtns {
  display: flex;
  gap: 4px;
}

.winbtns button {
  width: 20px;
  height: 20px;
  border-radius: 3px;
  background: linear-gradient(#6a6a6a, #2f2f2f);
}

.winbtns .close {
  background: linear-gradient(#f08a66, #dc4a1c);
}

/* menu */
.menubar {
  display: flex;
  align-items: center;
  gap: 14px;
  height: 24px;
  flex: none;
  padding: 0 4px 1px 3px;
  box-sizing: border-box;
  background: linear-gradient(#f0f0f0, #e0e0e0);
}

.menubar .ico18 {
  margin: 0 -10px 0 -13px;
}

.menubar > button {
  white-space: nowrap;
}

.menubar .spaced {
  margin-left: 9px;
}

.mdi {
  display: flex;
  gap: 2px;
  margin-left: auto;
}

.mdi button {
  width: 18px;
  height: 18px;
  box-sizing: border-box;
  border: 1px solid #888;
  border-radius: 3px;
  background: #f3f3f3;
}

.mdi .off {
  border-color: #bbb;
}

.grip {
  align-self: center;
  flex: none;
  width: 2px;
  height: 22px;
  background: repeating-linear-gradient(#aaa 0 1px, #fff 1px 2px, transparent 2px 4px);
}

.menubar .grip {
  height: 16px;
}

.grip.flat {
  width: 24px;
  height: 2px;
  background: repeating-linear-gradient(90deg, #999 0 2px, transparent 2px 4px);
}

/* toolbars */
.toolrow,
.filterrow,
.bottomrow {
  display: flex;
  flex: none;
  background: linear-gradient(#e6e6e6, #cfcfcf);
  border-bottom: 1px solid #f4f4f4;
}

.toolrow {
  height: 33px;
}

.toolrow + .toolrow {
  border-bottom-color: #a8a8a8;
}

.group {
  display: flex;
  align-items: center;
  justify-content: space-between;
  flex: none;
  box-sizing: border-box;
  padding: 0 5px;
  border-right: 1px solid #f6f6f6;
  box-shadow: inset -1px 0 0 #c2c2c2;
}

.tool.dim {
  opacity: .85;
}

.caret {
  flex: none;
  width: 0;
  border: 3px solid transparent;
  border-top: 4px solid #111;
  border-bottom: 0;
}

.caret.low {
  align-self: flex-end;
  margin-bottom: 8px;
}

.caret.left {
  align-self: flex-start;
  margin-left: 7px;
  border: 3px solid transparent;
  border-right: 4px solid #111;
  border-left: 0;
}

.start {
  display: flex;
  align-items: center;
  gap: 4px;
}

.search {
  display: flex;
  align-items: center;
  width: 112px;
  height: 22px;
  box-sizing: border-box;
  padding: 0 2px;
  border: 1px solid #a5a5a5;
  background: #fff;
}

.search input {
  flex: 1;
  min-width: 0;
  padding: 0;
  border: 0;
  outline: 0;
  font: inherit;
}

.search input::placeholder {
  color: #999;
  opacity: 1;
}

.search svg {
  width: 18px;
  height: 18px;
}

.filterrow {
  align-items: center;
  height: 28px;
  padding-left: 5px;
  border-bottom-color: #777;
  background: linear-gradient(#dedede, #cbcbcb);
}

.filterrow select {
  width: 117px;
  height: 17px;
  flex: none;
  margin-right: 8px;
  padding: 0 2px;
  appearance: none;
  border: 1px solid #aaa;
  border-radius: 3px;
  background: linear-gradient(#777, #777) right 3px top 5px / 9px 1px no-repeat,
    linear-gradient(#777, #777) right 4px top 6px / 7px 1px no-repeat,
    linear-gradient(#777, #777) right 5px top 7px / 5px 1px no-repeat,
    linear-gradient(#777, #777) right 6px top 8px / 3px 1px no-repeat,
    linear-gradient(#777, #777) right 7px top 9px / 1px 1px no-repeat,
    linear-gradient(#f3f3f3, #f3f3f3) right / 15px 100% no-repeat,
    linear-gradient(#aaa, #aaa) right / 16px 100% no-repeat, #d8d8d8;
  color: #999;
  opacity: 1;
  font: 12px/14px "Noto Sans CJK SC", sans-serif;
}

.filterrow select + select {
  width: 122px;
  margin-right: 0;
}

.group.small {
  height: 26px;
}

.group.small:last-of-type {
  border: 0;
  box-shadow: none;
}

.caret.last {
  margin: 8px 6px 0 auto;
}

/* work area */
.work {
  display: flex;
  flex: 1;
  min-height: 0;
}

.viewport {
  position: relative;
  flex: 1;
  min-width: 0;
  overflow: hidden;
  background: #333;
}

.scene {
  width: 100%;
  height: 100%;
}

.triad text {
  font: 12px "Liberation Sans", sans-serif;
}

.logo {
  position: absolute;
  left: 140px;
  bottom: 0;
  display: flex;
  flex-direction: column;
  width: 143px;
  height: 139px;
  margin: 0;
  background: #fff;
}

.logo figcaption {
  display: flex;
  flex-direction: column;
  align-items: center;
  padding-left: 8px;
  font: 500 26px/40px "Noto Sans CJK SC", sans-serif;
  color: #1c1c1c;
}

.logo small {
  font: 700 10px/12px Roboto, sans-serif;
}

.caption {
  position: absolute;
  margin: 0;
  color: #fff;
  font: 400 30px/40px "Noto Sans CJK SC", sans-serif;
  white-space: nowrap;
}

.caption.first {
  left: 329px;
  bottom: 47px;
}

.caption.second {
  left: 544px;
  bottom: 9px;
}

.sidebar {
  width: 34px;
  flex: none;
  background: #d3d3d3;
}

.sideband {
  display: flex;
  flex-direction: column;
  align-items: center;
  gap: 7px;
  padding: 2px 0 4px;
  border-bottom: 1px solid #aaa;
  background: #dcdcdc;
}

.sideband + .sideband {
  padding-top: 8px;
}

.navigator {
  display: flex;
  flex-direction: column;
  width: 370px;
  flex: none;
  box-sizing: border-box;
  padding: 0 7px 0 10px;
  border-right: 1px solid #999;
  border-left: 1px solid #f8f8f8;
  background: #eee;
}

.navigator h2 {
  display: flex;
  align-items: center;
  gap: 12px;
  margin: 0;
  padding-left: 3px;
  font: 700 13px/32px "Liberation Mono", "Noto Sans CJK SC", monospace;
}

.pin {
  width: 12px;
  height: 10px;
  border: solid #222;
  border-width: 2px 1px 1px;
}

.grid {
  position: relative;
  display: flex;
  flex-direction: column;
  flex: 1;
  min-height: 0;
  border: 1px solid #888;
  background: #fff;
}

.tablewrap {
  display: grid;
  flex: 1;
  min-height: 0;
  overflow: hidden;
}

table {
  width: 100%;
  height: 100%;
  table-layout: fixed;
  border-collapse: separate;
  border-spacing: 0;
}

.c1 {
  width: 228px;
}

.c2 {
  width: 44px;
}

.c3 {
  width: 47px;
}

th {
  height: 17px;
  box-sizing: border-box;
  padding: 0 0 0 6px;
  border-right: 1px solid #bbb;
  border-bottom: 1px solid #aaa;
  background: linear-gradient(#f6f6f6, #dcdcdc);
  font-weight: 400;
  line-height: 15px;
  text-align: left;
  white-space: nowrap;
}

td {
  height: 20px;
  box-sizing: border-box;
  padding: 0;
  border-right: 1px solid #ddd;
  border-bottom: 1px solid #e4e4e4;
}

td:first-child {
  border-right-color: #444;
}

td:last-child,
th:last-child {
  border-right: 0;
}

tbody tr:nth-child(even) {
  background: #f5f5f5;
}

.cut td {
  height: 13px;
  border-bottom: 0;
}

.node {
  display: flex;
  align-items: center;
  height: 19px;
  padding-left: 4px;
}

.guide {
  display: flex;
  align-items: center;
  align-self: stretch;
  width: 17px;
  padding-left: 2px;
  box-sizing: border-box;
  background: repeating-linear-gradient(#999 0 1px, transparent 1px 2px) 6px 0 / 1px 100% no-repeat,
    repeating-linear-gradient(90deg, #999 0 1px, transparent 1px 2px) 6px 50% / 9px 1px no-repeat;
}

.guide.begin {
  background-size: 1px 50%, 9px 1px;
  background-position: 6px 100%, 6px 50%;
}

.guide.end {
  background-size: 1px 50%, 9px 1px;
}

.guide button {
  width: 9px;
  height: 9px;
  border: 1px solid #888;
  border-radius: 2px;
  background: linear-gradient(#222, #222) center / 5px 1px no-repeat,
    linear-gradient(#222, #222) center / 1px 5px no-repeat, #fff;
}

.state {
  width: 14px;
  height: 14px;
  margin-right: 2px;
}

.name {
  margin-left: 2px;
}

.node > .name:first-child {
  margin-left: 0;
}

.hscroll {
  display: flex;
  align-items: center;
  height: 17px;
  flex: none;
  background: #f0f0f0;
}

.hscroll button {
  display: grid;
  place-items: center;
  width: 18px;
}

.hscroll svg {
  width: 9px;
  height: 9px;
}

.track {
  flex: 1;
  align-self: stretch;
}

.track i {
  display: block;
  width: 43%;
  height: 14px;
  margin-top: 1px;
  background: #cacaca;
}

.busy {
  position: absolute;
  left: 14px;
  top: 103px;
  width: 60px;
  height: 60px;
  mix-blend-mode: multiply;
}

.ring {
  position: absolute;
  left: 33px;
  top: 121px;
  width: 22px;
  height: 22px;
}

.splitter {
  display: grid;
  place-items: center;
  height: 12px;
  margin-bottom: 5px;
  background: linear-gradient(#ccc, #ccc) center / 100% 1px no-repeat;
}

.splitter i {
  width: 64px;
  height: 4px;
  border: solid #aaa;
  border-width: 0 1px 1px 0;
  background: #ddd;
  box-shadow: 0 0 0 4px #eee;
}

.tabs {
  display: flex;
  flex-direction: column;
  gap: 14px;
  width: 31px;
  flex: none;
  background: linear-gradient(90deg, #9c9c9c, #b2b2b2 12px);
}

.gear {
  align-self: center;
  margin: 5px 0 8px;
}

.tabgroup {
  display: flex;
  flex-direction: column;
  gap: 2px;
}

.tabgroup button {
  display: grid;
  place-items: center;
  width: 27px;
  height: 40px;
  box-sizing: border-box;
  border: 1px solid #777;
  border-left: 0;
  border-radius: 0 3px 3px 0;
  background: #dcdcdc;
}

.tabgroup .active {
  width: 29px;
  height: 43px;
  background: #eee;
}

.bottomrow {
  height: 33px;
  background: linear-gradient(#ececec, #cdcdcd);
}

.status {
  display: flex;
  height: 22px;
  flex: none;
  background: #d8d8d8;
}

.status span {
  box-sizing: border-box;
  border-right: 1px solid #f6f6f6;
}

.cue {
  width: 661px;
}

.msg {
  flex: 1;
}

.slot {
  width: 20px;
}

.slot:last-child {
  border: 0;
}

.tray {
  display: flex;
  align-items: center;
  justify-content: center;
  gap: 10px;
  width: 57px;
}
</style>
